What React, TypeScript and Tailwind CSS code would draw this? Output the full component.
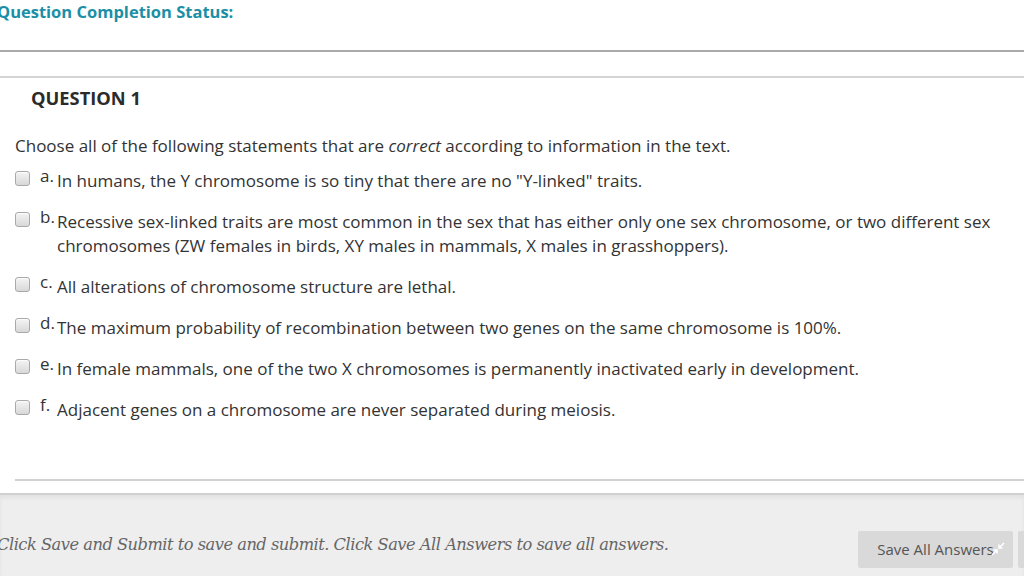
const OPTIONS: { key: string; text: string }[] = [
  { key: "a.", text: 'In humans, the Y chromosome is so tiny that there are no "Y-linked" traits.' },
  {
    key: "b.",
    text: "Recessive sex-linked traits are most common in the sex that has either only one sex chromosome, or two different sex chromosomes (ZW females in birds, XY males in mammals, X males in grasshoppers).",
  },
  { key: "c.", text: "All alterations of chromosome structure are lethal." },
  { key: "d.", text: "The maximum probability of recombination between two genes on the same chromosome is 100%." },
  { key: "e.", text: "In female mammals, one of the two X chromosomes is permanently inactivated early in development." },
  { key: "f.", text: "Adjacent genes on a chromosome are never separated during meiosis." },
];

function Checkbox() {
  return (
    <span className="mt-[3px] block h-[15px] w-[15px] shrink-0 rounded-[3px] border border-[#a9a9a9] bg-gradient-to-b from-[#f4f4f4] to-[#d8d8d8] shadow-[inset_0_1px_1px_rgba(255,255,255,0.8)]" />
  );
}

export default function App() {
  return (
    <div className="flex h-[576px] w-[1024px] flex-col overflow-hidden bg-white font-['Open_Sans',sans-serif] text-[#333]">
      {/* Status header */}
      <div className="h-[50px] shrink-0 pt-[1px]">
        <p className="-ml-[3px] text-[16.5px] font-bold leading-[22px] text-[#1b8fa6]">Question Completion Status:</p>
      </div>
      <div className="h-[2px] shrink-0 bg-[#aaaaaa]" />
      <div className="h-[24px] shrink-0" />
      <div className="h-[2px] shrink-0 bg-[#d4d4d4]" />

      {/* Question */}
      <div className="shrink-0 pl-[15px]">
        <h2 className="ml-[16px] mt-[9px] text-[18.3px] font-bold leading-[22px] text-[#2b2b2b]">QUESTION 1</h2>
        <p className="mt-[26px] text-[17px] leading-[22px]">
          Choose all of the following statements that are <em>correct</em> according to information in the text.
        </p>
        <div className="mt-[11px] flex flex-col gap-[16px] pr-[15px]">
          {OPTIONS.map((o) => (
            <label key={o.key} className="flex items-start">
              <Checkbox />
              <span className="ml-[10px] w-[17px] shrink-0 text-[17px] leading-[16px]">{o.key}</span>
              <span className="mt-[1px] text-[17px] leading-[24px]">{o.text}</span>
            </label>
          ))}
        </div>
        <div className="mt-[57px] h-[2px] bg-[#d2d2d2]" />
      </div>

      {/* Footer */}
      <div className="mt-[12px] flex-1 border-t-2 border-[#d0d0d0] bg-[#eeeeee] shadow-[inset_0_3px_4px_rgba(0,0,0,0.05)]">
        <div className="flex items-start pt-[36px]">
          <p className="-ml-[3px] mt-[2px] flex-1 font-['DejaVu_Serif',serif] text-[16.25px] italic leading-[24px] tracking-[-0.5px] text-[#666]">
            Click Save and Submit to save and submit. Click Save All Answers to save all answers.
          </p>
          <button
            type="button"
            className="relative flex h-[37px] w-[155px] shrink-0 items-center justify-center rounded-[2px] bg-[#d9d9d9] text-[15px] text-[#555]"
          >
            Save All Answers
            <svg className="absolute left-[132px] top-[10px]" width="16" height="16" viewBox="0 0 16 16" fill="none" stroke="white" strokeWidth="1.6">
              <path d="M14 2 L9 7 M9 3.5 V7 H12.5" />
              <path d="M2 14 L7 9 M7 12.5 V9 H3.5" />
            </svg>
          </button>
          <div className="ml-[5px] h-[37px] w-[6px] shrink-0 rounded-l-[2px] bg-[#d9d9d9]" />
        </div>
      </div>
    </div>
  );
}
